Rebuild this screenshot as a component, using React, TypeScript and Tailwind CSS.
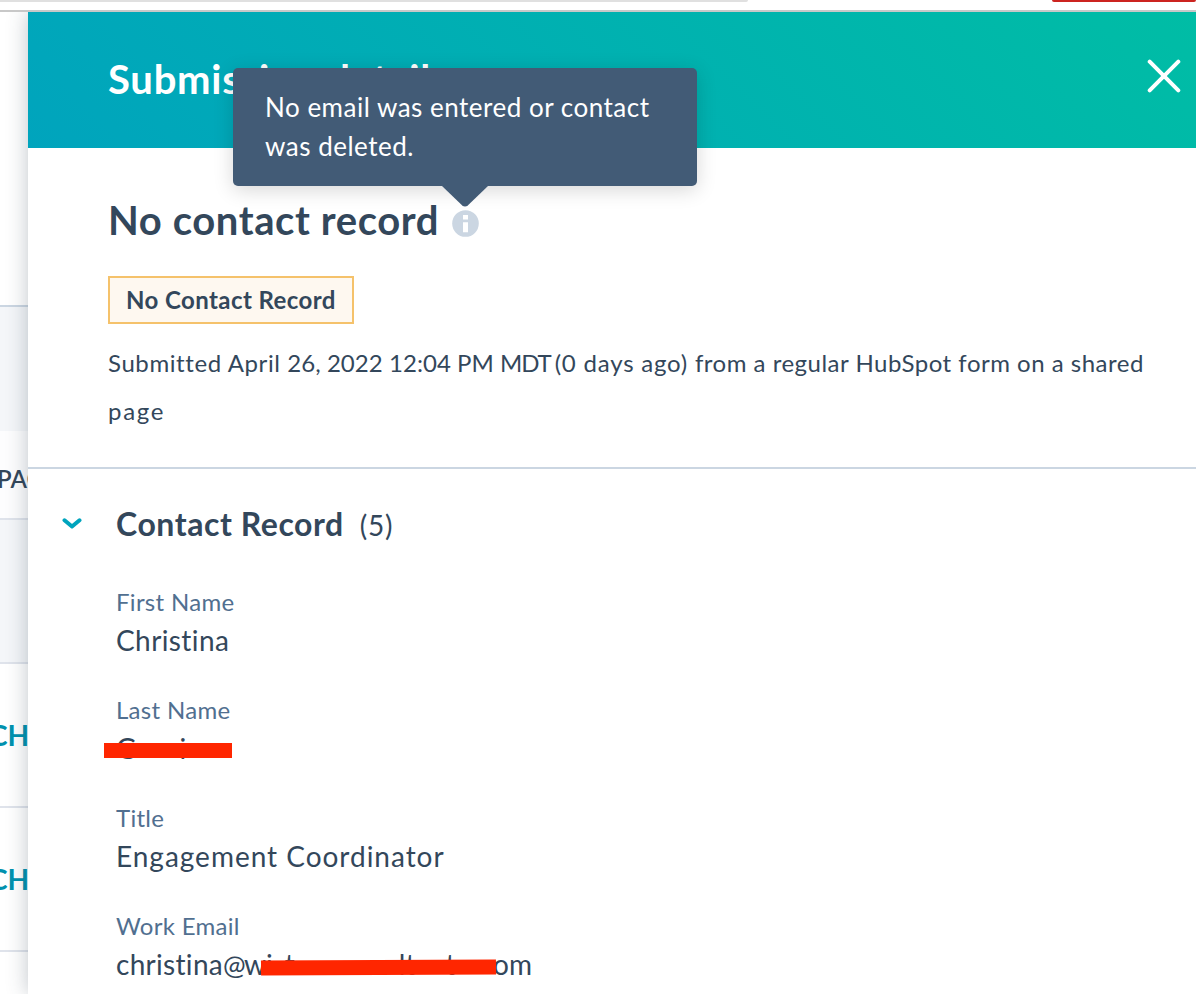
import React from 'react';

const Field: React.FC<{ label: string; children: React.ReactNode }> = ({ label, children }) => (
  <div className="h-[108px] pl-[88px]">
    <p className="text-2xl leading-[36px] tracking-[0.3px] text-[#516f90]">{label}</p>
    <div className="relative mt-0.5 text-[28px] leading-[36px] whitespace-nowrap">{children}</div>
  </div>
);

const Tooltip: React.FC = () => (
  <div className="absolute z-20 bottom-[51px] left-[13px] -translate-x-1/2 w-[464px] h-[118px] rounded-[5px] bg-[#425b76] pl-8 pt-[20px] shadow-[0_4px_20px_rgba(0,0,0,0.16)]">
    <p className="text-[26px] leading-[39px] tracking-[0.5px] font-normal text-white whitespace-nowrap">
      No email was entered or contact
      <br />
      was deleted.
    </p>
    <svg className="absolute top-full left-1/2 -translate-x-1/2" width="46" height="21" viewBox="0 0 46 21">
      <path d="M0 0h46L26 19.3q-3 2.6-6 0z" fill="#425b76" />
    </svg>
  </div>
);

const BackgroundTable: React.FC = () => (
  <div className="w-7 shrink-0 flex flex-col overflow-hidden bg-white text-[#33475b]">
    <div className="h-[293px] shrink-0"></div>
    <div className="h-[126px] shrink-0 border-t-2 border-[#cbd6e2] bg-[#f4f6f9]"></div>
    <div className="h-[87px] shrink-0 flex items-center bg-[#fdfdfe]">
      <span className="-ml-[3px] mt-2 text-2xl font-semibold">PAGE</span>
    </div>
    <div className="h-[144px] shrink-0 border-t-2 border-[#dfe3eb] bg-[#f4f6f9]"></div>
    {[0, 1].map((row) => (
      <div key={row} className="h-[144px] shrink-0 flex items-center border-t-2 border-[#dfe3eb]">
        <span className="-ml-[11px] text-[28px] font-bold text-[#0091ae]">CH</span>
      </div>
    ))}
    <div className="h-[60px] shrink-0 border-t-2 border-[#dfe3eb]"></div>
  </div>
);

const App: React.FC = () => {
  return (
    <div className="h-[994px] w-[1196px] flex flex-col overflow-hidden bg-white font-['Lato',sans-serif] text-[#33475b]">
      {/* Bottom edge of the browser toolbar */}
      <div className="h-3 shrink-0 flex justify-between border-b-2 border-[#c8c8c8]">
        <div className="w-[748px] h-0.5 bg-[#e0e0e0] rounded-br-full"></div>
        <div className="w-[144px] h-0.5 bg-[#cc2420] rounded-b-full"></div>
      </div>

      <div className="flex flex-1 min-h-0">
        <BackgroundTable />

        <main className="relative flex-1 bg-white shadow-[0_0_20px_rgba(45,62,80,0.3)] [clip-path:inset(0_0_0_-28px)]">
          <header className="h-[136px] flex items-center justify-between pl-20 pr-[15px] bg-[linear-gradient(45deg,#00a4bd,#00bda5)]">
            <h1 className="-mt-[3px] text-[40px] font-bold tracking-[0.75px] text-white">Submission details</h1>
            <svg className="-mt-2" width="34" height="34" viewBox="0 0 34 34" stroke="#fff" strokeWidth="4" strokeLinecap="round">
              <path d="M2.7 2.7l28.6 28.6M31.3 2.7L2.7 31.3" />
            </svg>
          </header>

          <section className="h-[321px] pl-20 border-b-2 border-[#cbd6e2]">
            <div className="pt-[47px] flex items-center">
              <h2 className="text-[40px] leading-[50px] font-bold tracking-[0.6px]">No contact record</h2>
              <span className="relative ml-[13px] mt-[7px] h-[27px]">
                <svg width="27" height="27" viewBox="0 0 27 27">
                  <circle cx="13.5" cy="13.5" r="13.3" fill="#cbd6e2" />
                  <path d="M11 5h5v4.6h-5zM11 12.3h5v10h-5z" fill="#fff" />
                </svg>
                <Tooltip />
              </span>
            </div>
            <div className="mt-[31px] h-12 w-[246px] flex items-center border-2 border-[#f5c26b] bg-[#fef8f0] pl-4">
              <span className="text-2xl font-bold tracking-[0.41px] whitespace-nowrap">No Contact Record</span>
            </div>
            <p className="mt-[15px] text-2xl leading-[48px] tracking-[0.5px]">
              <span className="tracking-[0.6px]">Submitted April </span>
              <span className="tracking-[0.05px]">26, 2022 12:04 PM </span>
              <span className="tracking-[-1.2px]">MDT </span>
              <span className="tracking-[0.8px]">(0 days ago) </span>
              from a regular HubSpot form on a shared
              <br />
              <span className="tracking-[1.7px]">page</span>
            </p>
          </section>

          <section className="pt-[32px]">
            <div className="h-[46px] flex items-center pl-[34px]">
              <svg width="20" height="12" viewBox="0 0 20 12" fill="none" stroke="#00a4bd" strokeWidth="4" strokeLinecap="round" strokeLinejoin="round">
                <path d="M2.5 2.3L10 8.5L17.5 2.3" />
              </svg>
              <h3 className="ml-[34px] text-[32px] leading-[46px] font-bold tracking-[0.55px]">Contact Record</h3>
              <span className="ml-4 mt-0.5 text-[28px] tracking-[0.8px]">(5)</span>
            </div>

            <div className="mt-[37px]">
              <Field label="First Name">
                <span className="tracking-[0.4px]">Christina</span>
              </Field>
              <Field label="Last Name">
                <span>G</span>
                <span className="ml-[43px]">i</span>
                <div className="absolute -left-3 top-[13px] w-32 h-[15px] bg-[#ff2600]"></div>
              </Field>
              <Field label="Title">
                <span className="tracking-[0.98px]">Engagement Coordinator</span>
              </Field>
              <Field label="Work Email">
                <span className="tracking-[0.3px]">christina</span>
                <span className="inline-block w-[25px] text-[27px]">@</span>
                <span className="-ml-1">wi</span>
                <span className="ml-3">t</span>
                <span className="ml-[104px]">lt</span>
                <span className="ml-[30px]">t</span>
                <span className="absolute left-[377px]">om</span>
                <div className="absolute left-[144.5px] top-[14px] w-[235px] h-[15px] bg-[#ff2600] -rotate-[0.3deg]"></div>
              </Field>
            </div>
          </section>
        </main>
      </div>
    </div>
  );
};

export default App;
